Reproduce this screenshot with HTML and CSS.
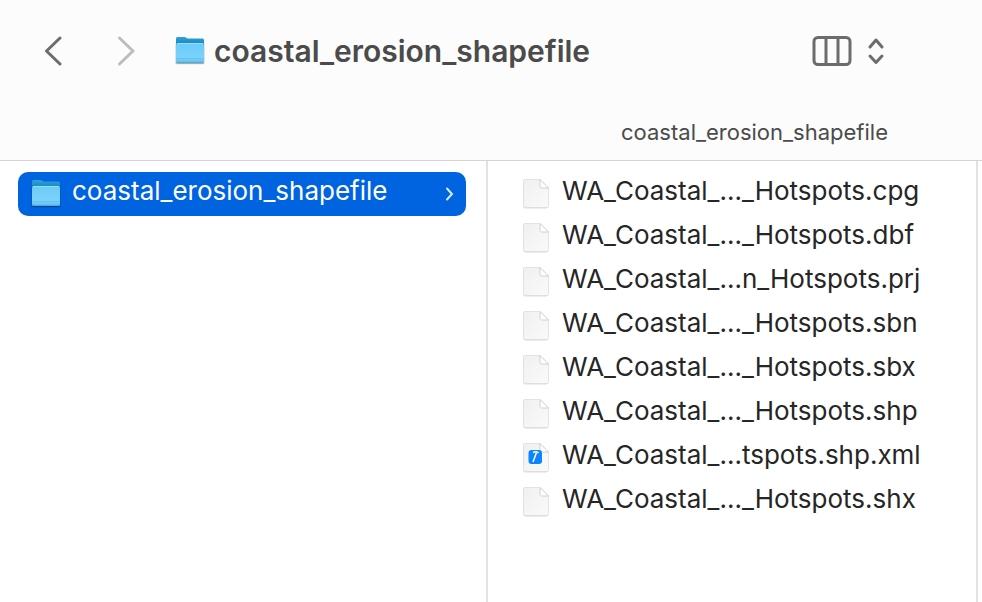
FILE: index.html
```html
<!DOCTYPE html>
<html lang="en">
    <head>
        <meta charset="utf-8">
        <title>coastal_erosion_shapefile</title>
        <link rel="stylesheet" href="styles.css">
    </head>

    <body>
        <!-- shared icon shapes -->
        <svg class="defs" aria-hidden="true">
            <defs>
                <linearGradient id="folderBack" x1="0" y1="0" x2="0" y2="1">
                    <stop offset="0" stop-color="#2fa3d8"/>
                    <stop offset=".3" stop-color="#1584be"/>
                </linearGradient>
                <linearGradient id="folderFront" x1="0" y1="0" x2="0" y2="1">
                    <stop offset="0" stop-color="#6bcbf8"/>
                    <stop offset=".75" stop-color="#7bd3fb"/>
                    <stop offset="1" stop-color="#5abcee"/>
                </linearGradient>
                <linearGradient id="paper" x1="0" y1="0" x2="1" y2="1">
                    <stop offset="0" stop-color="#f0f0f0"/>
                    <stop offset="1" stop-color="#fafafa"/>
                </linearGradient>
            </defs>
            <symbol id="folder" viewBox="0 0 32 32">
                <path d="M2 27V3.500A1.500 1.500 0 0 1 3.500 2h7C12 2 12.500 3.500 14 3.500h14.500A1.500 1.500 0 0 1 30 5v22z" fill="url(#folderBack)"/>
                <rect x="1" y="8" width="30" height="21.500" rx="2" fill="#000" opacity=".1"/>
                <rect x="2" y="8" width="28" height="21" rx="1.500" fill="#000" opacity=".25"/>
                <rect x="2" y="8" width="28" height="20" rx="1.500" fill="url(#folderFront)"/>
                <path d="M3 8.500h26" stroke="#95dffc"/>
                <path d="M2 23.500h28" stroke="#5cbbe8" stroke-width=".7"/>
                <path d="M3 27.500h26" stroke="#4eabda"/>
            </symbol>
            <symbol id="file" viewBox="0 0 32 32">
                <path d="M4 3h15.500l8.500 8.500V28.500a2 2 0 0 1-2 2H5.500a2 2 0 0 1-2-2V4z" fill="#000" opacity=".14"/>
                <path d="M4.500 1.500h15.500L28.500 10v17.500a2 2 0 0 1-2 2h-21a2 2 0 0 1-2-2v-25a1 1 0 0 1 1-1z" fill="url(#paper)" stroke="#dadada" stroke-width=".7"/>
                <path d="M20 1.500V8.500A1.500 1.500 0 0 0 21.500 10h7z" fill="#fff" stroke="#c6c6c6" stroke-width=".8"/>
            </symbol>
        </svg>

        <header class="header">
            <div class="toolbar">
                <button class="navButton" aria-label="Back">
                    <svg width="20" height="30" viewBox="0 0 20 30"><path d="M16 2 2.500 15 16 28"/></svg>
                </button>
                <button class="navButton" aria-label="Forward" disabled>
                    <svg width="20" height="30" viewBox="0 0 20 30"><path d="M3.500 2 17 15 3.500 28"/></svg>
                </button>
                <svg class="icon"><use href="#folder"/></svg>
                <h1 class="title">coastal_erosion_shapefile</h1>
                <button class="viewButton" aria-label="View as columns">
                    <svg width="74" height="32" viewBox="0 0 74 32">
                        <rect x="2" y="2.500" width="36" height="27" rx="4"/>
                        <path d="M14 3v26M26 3v26"/>
                        <path class="arrows" d="m58 12 6-7 6 7M58 21l6 6.500 6-6.500"/>
                    </svg>
                </button>
            </div>
            <div class="tabTitle">coastal_erosion_shapefile</div>
        </header>

        <main class="columns">
            <ul class="column">
                <li><a class="row selected" href="#">
                    <svg class="icon"><use href="#folder"/></svg>
                    <span class="name">coastal_erosion_shapefile</span>
                    <svg class="chevron" width="10" height="14" viewBox="0 0 10 14"><path d="m3 1.500 5 5.500-5 5.500"/></svg>
                </a></li>
            </ul>

            <ul class="column files">
                <li><a class="row" href="#"><svg class="icon"><use href="#file"/></svg><span class="name">WA_Coastal_..._Hotspots.cpg</span></a></li>
                <li><a class="row" href="#"><svg class="icon"><use href="#file"/></svg><span class="name">WA_Coastal_..._Hotspots.dbf</span></a></li>
                <li><a class="row" href="#"><svg class="icon"><use href="#file"/></svg><span class="name">WA_Coastal_...n_Hotspots.prj</span></a></li>
                <li><a class="row" href="#"><svg class="icon"><use href="#file"/></svg><span class="name">WA_Coastal_..._Hotspots.sbn</span></a></li>
                <li><a class="row" href="#"><svg class="icon"><use href="#file"/></svg><span class="name">WA_Coastal_..._Hotspots.sbx</span></a></li>
                <li><a class="row" href="#"><svg class="icon"><use href="#file"/></svg><span class="name">WA_Coastal_..._Hotspots.shp</span></a></li>
                <li><a class="row" href="#">
                    <svg class="icon" viewBox="0 0 32 32">
                        <use href="#file"/>
                        <rect x="8.500" y="8" width="13.500" height="14" rx="3" fill="#0a84ff"/>
                        <path d="m13 20 3.500-9.500" stroke="#fff" stroke-width="1.500"/>
                        <path d="M13 10.500c2-1 4-1 5.500.500" stroke="#fff" stroke-width="1.500" fill="none"/>
                    </svg>
                    <span class="name">WA_Coastal_...tspots.shp.xml</span>
                </a></li>
                <li><a class="row" href="#"><svg class="icon"><use href="#file"/></svg><span class="name">WA_Coastal_..._Hotspots.shx</span></a></li>
            </ul>
        </main>
    </body>
</html>
```

FILE: styles.css
```css
* {
    box-sizing: border-box;
}

body {
    margin: 0;
    min-height: 100vh;
    display: flex;
    flex-direction: column;
    background-color: #fff;
    color: #262626;
    font-family: Inter, "Liberation Sans", sans-serif;
}

.defs {
    position: absolute;
    width: 0;
    height: 0;
}

.header {
    background-color: #fcfcfc;
    border-bottom: 1px solid #d5d5d5;
    color: #4b4b4b;
}

.toolbar {
    display: flex;
    align-items: center;
    height: 102px;
    padding: 0 96px 0 44px;
}

.toolbar button {
    display: flex;
    padding: 0;
    border: 0;
    background: none;
    fill: none;
    stroke: #6c6c6c;
    stroke-width: 3px;
    stroke-linecap: round;
    stroke-linejoin: round;
}

.toolbar .navButton {
    margin-right: 52px;
}

.toolbar .navButton:disabled {
    margin-right: 38px;
    stroke: #bdbdbd;
}

.toolbar .viewButton {
    margin-left: auto;
}

.title {
    margin: 0 0 0 8px;
    font-size: 30px;
    line-height: 36px;
    font-weight: 600;
}

.tabTitle {
    padding: 16px 94px 14px 0;
    font-size: 22px;
    line-height: 28px;
    text-align: right;
}

.columns {
    flex: 1;
    display: grid;
    grid-template-columns: 49.9% 1fr;
    padding-right: 4px;
}

.column {
    margin: 0;
    padding: 11px 20px 11px 18px;
    border-right: 2px solid #e2e2e2;
    list-style: none;
}

.files {
    padding-left: 20px;
}

.row {
    display: flex;
    align-items: center;
    height: 44px;
    padding: 0 12px;
    border-radius: 10px;
    color: inherit;
    font-size: 26px;
    text-decoration: none;
}

.selected {
    background-color: #0064e1;
    color: #fff;
}

.icon {
    flex: none;
    width: 32px;
    height: 32px;
}

.name {
    margin-left: 10px;
    padding-bottom: 6px;
    line-height: 32px;
    white-space: nowrap;
}

.chevron {
    margin-left: auto;
    fill: none;
    stroke: #d9e8fc;
    stroke-width: 2px;
    stroke-linecap: round;
}
```
